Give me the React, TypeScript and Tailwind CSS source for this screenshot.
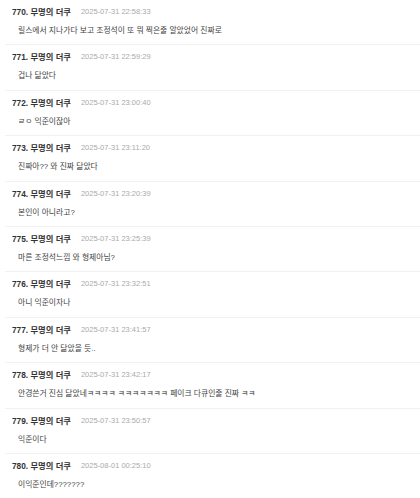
const comments = [
  { no: 770, date: '2025-07-31 22:58:33', text: '릴스에서 지나가다 보고 조정석이 또 뭐 찍은줄 알았었어 진짜로' },
  { no: 771, date: '2025-07-31 22:59:29', text: '겁나 닮았다' },
  { no: 772, date: '2025-07-31 23:00:40', text: 'ㄹㅇ 익준이잖아' },
  { no: 773, date: '2025-07-31 23:11:20', text: '진짜아?? 와 진짜 닮았다' },
  { no: 774, date: '2025-07-31 23:20:39', text: '본인이 아니라고?' },
  { no: 775, date: '2025-07-31 23:25:39', text: '마른 조정석느낌 와 형제아님?' },
  { no: 776, date: '2025-07-31 23:32:51', text: '아니 익준이자나' },
  { no: 777, date: '2025-07-31 23:41:57', text: '형제가 더 안 닮았을 듯..' },
  { no: 778, date: '2025-07-31 23:42:17', text: '안경쓴거 진심 닮았네ㅋㅋㅋㅋ ㅋㅋㅋㅋㅋㅋㅋ 페이크 다큐인줄 진짜 ㅋㅋ' },
  { no: 779, date: '2025-07-31 23:50:57', text: '익준이다' },
  { no: 780, date: '2025-08-01 00:25:10', text: '이익준인데???????' },
];

export default function App() {
  return (
    <div className="h-[498px] w-[420px] overflow-hidden bg-white font-['Liberation_Sans','Noto_Sans_CJK_KR',sans-serif]">
      <ul>
        {comments.map((c) => (
          <li key={c.no} className="ml-[5px] flex h-[45.4px] flex-col border-b border-[#f1f1f1] pl-[7px] pt-[5px]">
            <div className="flex items-center leading-[14px]">
              <span className="text-[8.3px] font-bold text-[#333]">
                {c.no}. 무명의 더쿠
              </span>
              <span className="ml-[10px] text-[7.5px] text-[#aaa]">{c.date}</span>
            </div>
            <p className="mt-[5px] pl-[6px] text-[7.8px] leading-[14px] text-[#3f3f3f]">{c.text}</p>
          </li>
        ))}
      </ul>
    </div>
  );
}
